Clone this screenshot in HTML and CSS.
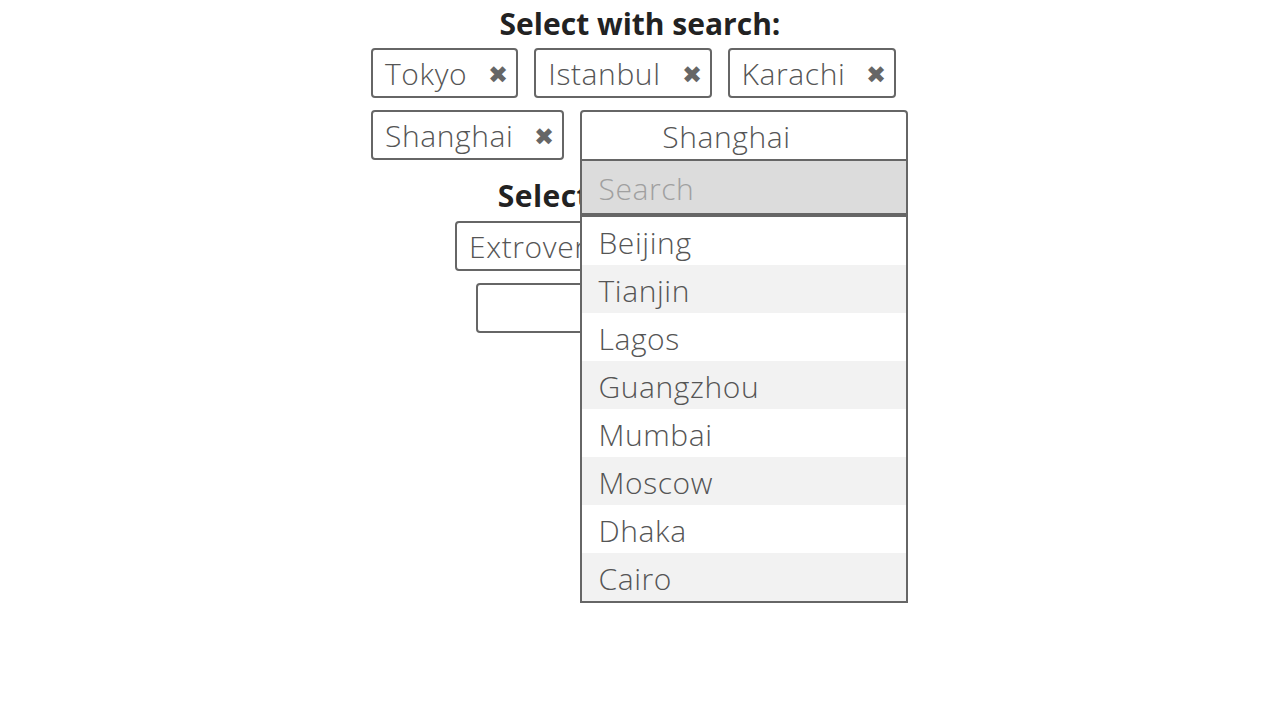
FILE: index.html
```html
<!DOCTYPE html>
<html>
<head>
<meta charset="utf-8">
<link rel="stylesheet" href="styles.css">
</head>
<body>
<div class="wrap">
  <h2 class="title">Select with search:</h2>
  <div class="chips">
    <div class="chip"><span>Tokyo</span><span class="x">&#x2716;</span></div>
    <div class="chip"><span>Istanbul</span><span class="x">&#x2716;</span></div>
    <div class="chip"><span>Karachi</span><span class="x">&#x2716;</span></div>
    <div class="chip"><span>Shanghai</span><span class="x">&#x2716;</span></div>
    <div class="select">
      <div class="select-box">Shanghai</div>
      <div class="dropdown">
        <div class="search">Search</div>
        <ul class="options">
          <li>Beijing</li>
          <li>Tianjin</li>
          <li>Lagos</li>
          <li>Guangzhou</li>
          <li>Mumbai</li>
          <li>Moscow</li>
          <li>Dhaka</li>
          <li>Cairo</li>
        </ul>
      </div>
    </div>
  </div>
  <h2 class="title second">Select personality:</h2>
  <div class="plain wide">Extrovert</div>
  <div class="plain narrow"></div>
</div>
</body>
</html>
```
FILE: styles.css
```css
html, body {
  margin: 0;
  background: #ffffff;
}
body {
  min-height: 720px;
  font-family: "Open Sans", "Noto Sans", sans-serif;
  color: #555555;
}
.wrap {
  width: 540px;
  margin: 0 auto;
  display: flex;
  flex-direction: column;
  align-items: center;
}
.title {
  margin: 0;
  font-size: 30px;
  font-weight: 700;
  line-height: 48px;
  color: #222222;
  text-align: center;
}
.title.second {
  margin-top: 10px;
  line-height: 50px;
  letter-spacing: 0.45px;
}
.chips {
  align-self: stretch;
  display: flex;
  flex-wrap: wrap;
  gap: 12px 16px;
  padding-left: 1px;
}
.chip {
  box-sizing: border-box;
  height: 50px;
  border: 2px solid #666666;
  border-radius: 4px;
  padding: 0 8px 0 12px;
  display: flex;
  align-items: center;
  gap: 21px;
  font-size: 30px;
  font-weight: 300;
  letter-spacing: 0.6px;
}
.chip .x {
  font-size: 24px;
  letter-spacing: 0;
  color: #666666;
}
.select {
  position: relative;
  width: 328px;
}
.select-box {
  box-sizing: border-box;
  height: 51px;
  border: 2px solid #666666;
  border-radius: 4px 4px 0 0;
  font-size: 30px;
  font-weight: 300;
  letter-spacing: 0.6px;
  line-height: 49px;
  text-align: center;
  padding-right: 36px;
}
.dropdown {
  position: absolute;
  top: 51px;
  left: 0;
  width: 328px;
  box-sizing: border-box;
  border: 2px solid #666666;
  border-top: none;
  background: #ffffff;
  z-index: 2;
}
.search {
  height: 52px;
  line-height: 56px;
  background: #dcdcdc;
  border-bottom: 4px solid #666666;
  padding-left: 16px;
  font-size: 30px;
  font-weight: 300;
  letter-spacing: 0.6px;
  color: #a0a0a0;
}
.options {
  list-style: none;
  margin: 0;
  padding: 0;
}
.options li {
  height: 48px;
  line-height: 52px;
  padding-left: 16px;
  font-size: 30px;
  font-weight: 300;
  letter-spacing: 0.6px;
  color: #555555;
}
.options li:nth-child(even) {
  background: #f2f2f2;
}
.plain {
  box-sizing: border-box;
  height: 50px;
  border: 2px solid #666666;
  border-radius: 4px;
  font-size: 30px;
  font-weight: 300;
  letter-spacing: 0.6px;
  line-height: 48px;
  padding-left: 12px;
}
.plain.wide {
  width: 370px;
}
.plain.narrow {
  width: 328px;
  margin-top: 12px;
}
```
